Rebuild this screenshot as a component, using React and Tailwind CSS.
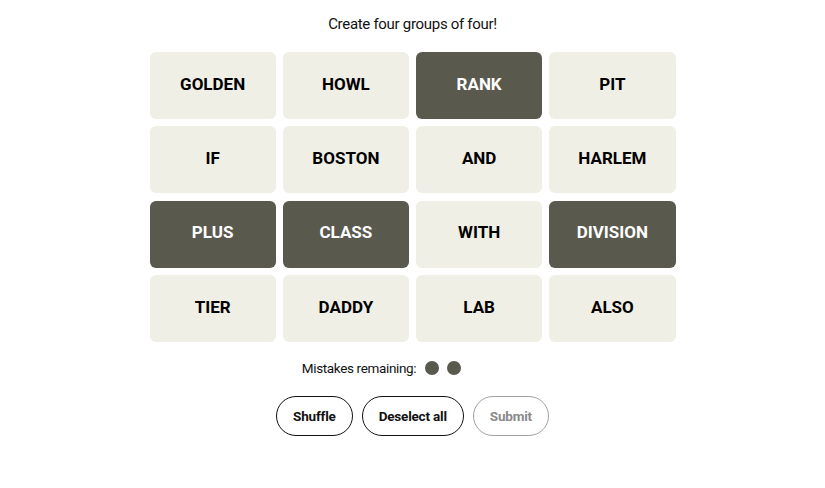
import React from "react";

const words = [
  ["GOLDEN", false], ["HOWL", false], ["RANK", true], ["PIT", false],
  ["IF", false], ["BOSTON", false], ["AND", false], ["HARLEM", false],
  ["PLUS", true], ["CLASS", true], ["WITH", false], ["DIVISION", true],
  ["TIER", false], ["DADDY", false], ["LAB", false], ["ALSO", false],
];

export default function App() {
  return (
    <div className="w-[825px] h-[488px] bg-white flex flex-col items-center" style={{ fontFamily: "Roboto, 'Liberation Sans', sans-serif" }}>
      <div className="mt-[14px] h-[20px] leading-[20px] text-[15px] tracking-[-0.3px] text-[#121212]">Create four groups of four!</div>
      <div className="mt-[18px] grid grid-cols-4 w-[526px] gap-x-[7px] gap-y-[7.3px]">
        {words.map(([w, sel]) => (
          <div
            key={w}
            className={
              "h-[67px] rounded-[6px] flex items-center justify-center font-bold text-[17px] pb-[2px] " +
              (sel ? "bg-[#5a594e] text-white" : "bg-[#efefe6] text-black")
            }
          >
            {w}
          </div>
        ))}
      </div>
      <div className="mt-[16px] mr-[62px] h-[20px] flex items-center text-[13.5px] tracking-[-0.35px] text-[#121212]">
        <span>Mistakes remaining:</span>
        <div className="flex gap-[8px] ml-[9px]">
          <span className="w-[14px] h-[14px] rounded-full bg-[#5a594e]" />
          <span className="w-[14px] h-[14px] rounded-full bg-[#5a594e]" />
        </div>
      </div>
      <div className="mt-[18px] flex gap-[9px]">
        <button className="h-[40px] px-[16px] rounded-full border border-[#121212] text-[13.5px] tracking-[-0.2px] font-bold text-[#121212] bg-white">Shuffle</button>
        <button className="h-[40px] px-[16px] rounded-full border border-[#121212] text-[13.5px] tracking-[-0.2px] font-bold text-[#121212] bg-white">Deselect all</button>
        <button className="h-[40px] px-[16px] rounded-full border border-[#a0a0a0] text-[13.5px] tracking-[-0.2px] font-bold text-[#8a8a8a] bg-white">Submit</button>
      </div>
    </div>
  );
}
